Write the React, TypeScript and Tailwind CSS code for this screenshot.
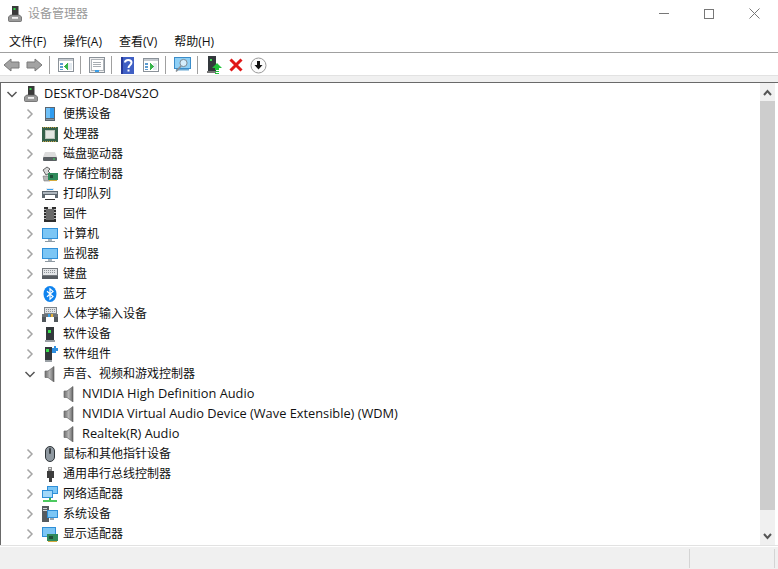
import { ReactNode } from 'react';

const Svg = ({ children }: { children: ReactNode }) => (
  <svg width={16} height={16} viewBox="0 0 16 16" shapeRendering="crispEdges" className="block shrink-0">
    {children}
  </svg>
);

const DesktopIcon = () => (
  <svg width={14} height={16} viewBox="0 0 14 16" className="block shrink-0">
    <rect x="4" y="0" width="6.5" height="9" fill="#3a3a3a" />
    <rect x="5.5" y="2" width="2" height="2" fill="#35d84a" />
    <path d="M2.5 9h9l2 2v3.5a1 1 0 0 1-1 1h-11a1 1 0 0 1-1-1V11z" fill="#9a9a9a" stroke="#555" strokeWidth="0.7" />
    <rect x="4" y="11" width="6" height="1.8" fill="#f2f2f2" />
  </svg>
);

const Portable = () => (
  <Svg>
    <rect x="3" y="1" width="10" height="14" fill="#5c6670" />
    <rect x="4" y="2" width="8" height="10" fill="#2f9cf0" />
    <rect x="4" y="2" width="4" height="10" fill="#6fc0f7" />
    <rect x="4" y="13" width="8" height="1" fill="#8b949c" />
  </Svg>
);

const Cpu = () => (
  <Svg>
    <rect x="0" y="1" width="16" height="15" fill="#35604a" />
    <path d="M1 1h14M1 15.5h14" stroke="#c9a24a" strokeWidth="1" strokeDasharray="1 1" />
    <rect x="3" y="4" width="10" height="9" fill="#b9c2ba" />
    <rect x="4" y="5" width="8" height="7" fill="#e3e7e3" />
  </Svg>
);

const Disk = () => (
  <svg width="16" height="16" viewBox="0 0 16 16" className="block shrink-0">
    <path d="M3 6h10L15 11H1z" fill="#dcdcdc" />
    <rect x="1" y="11" width="14" height="4" rx="1" fill="#5a5f63" />
    <rect x="11" y="12.5" width="2" height="1" fill="#39e05a" />
  </svg>
);

const Storage = () => (
  <svg width="16" height="16" viewBox="0 0 16 16" className="block shrink-0">
    <path d="M1 4l4-3 3 2-2 2 2 2-4 2z" fill="#d8d8d8" stroke="#444" strokeWidth="0.8" />
    <path d="M1 10h7v5H2z" fill="#b5b5b5" stroke="#666" strokeWidth="0.5" />
    <rect x="6" y="7" width="10" height="7" fill="#2f8a5b" />
    <rect x="8" y="9" width="3" height="3" fill="#1e4f38" />
    <rect x="7" y="14" width="8" height="1" fill="#d3aa3e" />
  </svg>
);

const Printer = () => (
  <Svg>
    <rect x="4" y="2" width="8" height="3" fill="#e8eef4" />
    <rect x="5" y="3" width="6" height="1" fill="#3aa0ea" />
    <rect x="0" y="5" width="16" height="7" fill="#5f686f" />
    <rect x="1" y="6" width="14" height="2" fill="#aeb6bd" />
    <rect x="3" y="9" width="10" height="5" fill="#fff" />
    <rect x="3" y="13" width="10" height="1" fill="#333" />
  </Svg>
);

const Chip = () => (
  <Svg>
    <rect x="2" y="1" width="12" height="15" fill="#2e2e2e" />
    <rect x="6" y="1" width="4" height="2" fill="#e8e8e8" />
    <rect x="4" y="3" width="8" height="11" fill="#6a6a6a" />
    <path d="M2 3h2v1H2zM2 6h2v1H2zM2 9h2v1H2zM2 12h2v1H2zM12 3h2v1h-2zM12 6h2v1h-2zM12 9h2v1h-2zM12 12h2v1h-2z" fill="#bdbdbd" />
  </Svg>
);

const Monitor = () => (
  <Svg>
    <rect x="0" y="2" width="16" height="11" fill="#2f8fd8" />
    <rect x="1" y="3" width="14" height="9" fill="#7cc6f5" />
    <rect x="6" y="13" width="4" height="2" fill="#a8b4bd" />
    <rect x="3" y="15" width="10" height="1" fill="#8e9aa3" />
  </Svg>
);

const Keyboard = () => (
  <Svg>
    <rect x="0" y="2" width="16" height="11" fill="#74797e" />
    <rect x="1" y="3" width="14" height="6" fill="#e4e6e8" />
    <path d="M2 4.5h12M2 6.5h12" stroke="#8f9499" strokeWidth="1" strokeDasharray="1 1" />
    <rect x="0" y="10" width="16" height="3" fill="#565b60" />
  </Svg>
);

const Bluetooth = () => (
  <svg width="16" height="16" viewBox="0 0 16 16" className="block shrink-0">
    <ellipse cx="8" cy="8" rx="6.5" ry="8" fill="#0f83ee" />
    <path d="M5 5.2l6 5.4L8 13.2V2.8l3 2.6L5 10.8" fill="none" stroke="#fff" strokeWidth="1.2" />
  </svg>
);

const Hid = () => (
  <Svg>
    <rect x="2" y="1" width="13" height="7" fill="#7f858a" />
    <rect x="3" y="2" width="11" height="5" fill="#dfe2e5" />
    <path d="M4 3h9M4 5h9" stroke="#8f9499" strokeDasharray="1 1" />
    <rect x="0" y="8" width="16" height="3" fill="#6d7378" />
    <rect x="0" y="11" width="4" height="5" fill="#50565b" />
    <rect x="12" y="11" width="4" height="5" fill="#50565b" />
    <rect x="6" y="8" width="2" height="3" fill="#3aa0ea" />
    <rect x="9" y="8" width="2" height="3" fill="#e2b23b" />
  </Svg>
);

const SoftwareDevice = () => (
  <Svg>
    <rect x="4" y="1" width="8" height="13" fill="#33383c" />
    <rect x="6" y="4" width="3" height="3" fill="#3be04f" />
    <rect x="3" y="14" width="10" height="2" fill="#9aa0a5" />
  </Svg>
);

const SoftwareComponent = () => (
  <Svg>
    <rect x="3" y="1" width="7" height="13" fill="#33383c" />
    <rect x="4" y="3" width="3" height="3" fill="#3be04f" />
    <rect x="3" y="14" width="7" height="2" fill="#9aa0a5" />
    <path d="M10 2h2V0h2v2h2v3h-2v2h-4z" fill="#2f8fe0" />
  </Svg>
);

const Speaker = ({ id }: { id: string }) => (
  <svg width="16" height="16" viewBox="0 0 16 16" className="block shrink-0">
    <defs>
      <linearGradient id={id} x1="0" x2="1" y1="0" y2="0">
        <stop offset="0" stopColor="#6e6e6e" />
        <stop offset="0.5" stopColor="#b4b4b4" />
        <stop offset="0.8" stopColor="#8a8a8a" />
        <stop offset="1" stopColor="#555" />
      </linearGradient>
    </defs>
    <path d="M3 5h3l6-4.500v15.500l-6-4.500H3z" fill={`url(#${id})`} stroke="#6a6a6a" strokeWidth="0.7" />
  </svg>
);

const Mouse = () => (
  <svg width="16" height="16" viewBox="0 0 16 16" className="block shrink-0">
    <rect x="3.5" y="0.5" width="9" height="15" rx="4.5" fill="#8f98a0" stroke="#2f3539" />
    <rect x="7" y="2" width="2" height="6" rx="1" fill="#3b4145" />
  </svg>
);

const Usb = () => (
  <Svg>
    <rect x="6" y="1" width="4" height="4" fill="#8e8e8e" />
    <rect x="7" y="2" width="2" height="1" fill="#e8e8e8" />
    <rect x="5" y="5" width="7" height="7" fill="#3d3d3d" />
    <rect x="7" y="12" width="3" height="4" fill="#3d3d3d" />
  </Svg>
);

const Network = () => (
  <Svg>
    <rect x="5" y="0" width="11" height="8" fill="#2f8fd8" />
    <rect x="6" y="1" width="9" height="6" fill="#7cc6f5" />
    <rect x="0" y="4" width="11" height="8" fill="#2f8fd8" />
    <rect x="1" y="5" width="9" height="6" fill="#a3d8f8" />
    <rect x="7" y="12" width="2" height="2" fill="#38b54a" />
    <rect x="1" y="14" width="14" height="2" fill="#4cc95f" />
  </Svg>
);

const SystemDevice = () => (
  <Svg>
    <rect x="0" y="0" width="7" height="16" fill="#555b60" />
    <rect x="1" y="2" width="4" height="1" fill="#d0d4d8" />
    <rect x="1" y="4" width="4" height="1" fill="#d0d4d8" />
    <rect x="5" y="4" width="11" height="8" fill="#2f8fd8" />
    <rect x="6" y="5" width="9" height="6" fill="#7cc6f5" />
    <rect x="8" y="12" width="4" height="2" fill="#9aa4ab" />
  </Svg>
);

const DisplayAdapter = () => (
  <Svg>
    <rect x="0" y="1" width="14" height="10" fill="#2f8fd8" />
    <rect x="1" y="2" width="12" height="8" fill="#7cc6f5" />
    <rect x="5" y="8" width="11" height="7" fill="#2f8a5b" />
    <rect x="7" y="10" width="4" height="3" fill="#1e4f38" />
    <rect x="6" y="15" width="9" height="1" fill="#d3aa3e" />
  </Svg>
);

const Chevron = ({ open }: { open?: boolean }) => (
  <svg width="12" height="12" viewBox="0 0 12 12" className="block shrink-0">
    <path
      d={open ? 'M1.5 4l4.5 4.5L10.5 4' : 'M3.5 1.5L8 6l-4.5 4.5'}
      fill="none"
      stroke={open ? '#555' : '#a6a6a6'}
      strokeWidth="1.5"
    />
  </svg>
);

const Sep = ({ className }: { className: string }) => <div className={`h-[18px] w-px shrink-0 bg-[#a0a0a0] ${className}`} />;

const ArrowLeft = () => (
  <svg width="17" height="14" viewBox="0 0 17 14" className="block shrink-0">
    <path d="M1 7l7-6v3h8v6H8v3z" fill="#a3a3a3" stroke="#7a7a7a" />
  </svg>
);

const ArrowRight = () => (
  <svg width="17" height="14" viewBox="0 0 17 14" className="block shrink-0">
    <path d="M16 7L9 1v3H1v6h8v3z" fill="#a3a3a3" stroke="#7a7a7a" />
  </svg>
);

const PaneIcon = ({ flip }: { flip?: boolean }) => (
  <Svg>
    <rect x="0.5" y="1.5" width="15" height="13" fill="#fff" stroke="#8b9299" />
    <rect x="1" y="2" width="14" height="2" fill="#c4cad0" />
    <path d="M2 6h3v2H2zM2 9h3v2H2zM2 12h3v1H2z" fill="#5b9bd0" />
    <path d="M10 6h4v7h-4z" fill="#e3eaf0" />
    <path d={flip ? 'M7 6l4 3.5-4 3.5z' : 'M10 6L6 9.5l4 3.5z'} fill="#35b34a" />
  </Svg>
);

const Properties = () => (
  <Svg>
    <rect x="0.5" y="0.5" width="15" height="15" fill="#f0f0f0" stroke="#8b9299" />
    <rect x="2" y="2" width="12" height="11" fill="#fff" stroke="#b0b5ba" />
    <path d="M4 5h8M4 7h8M4 9h8" stroke="#a8adb2" />
    <rect x="6" y="13" width="4" height="2" fill="#3aa0ea" />
  </Svg>
);

const Help = () => (
  <svg width="14" height="17" viewBox="0 0 14 17" className="block shrink-0">
    <rect x="0" y="0" width="13" height="17" fill="#3f5fc4" />
    <rect x="0" y="0" width="2" height="17" fill="#26399a" />
    <path d="M4 5.500c0-3.500 6.500-3.500 6.500 0 0 3-3 2.500-3 5.500" fill="none" stroke="#fff" strokeWidth="2" />
    <rect x="6.500" y="12.500" width="2" height="2" fill="#fff" />
  </svg>
);

const ScanMonitor = () => (
  <svg width="17" height="16" viewBox="0 0 17 16" className="block shrink-0">
    <rect x="0.5" y="0.5" width="16" height="11" fill="#8fd0f6" stroke="#3b8dc9" />
    <rect x="2" y="12" width="13" height="1.5" fill="#6aa9d3" />
    <circle cx="9.5" cy="6" r="3.6" fill="#d5eefc" stroke="#7e8a93" />
    <path d="M7 9l-5 5.500" stroke="#8a8f94" strokeWidth="1.6" />
  </svg>
);

const UpdateDriver = () => (
  <svg width="15" height="18" viewBox="0 0 15 18" className="block shrink-0">
    <rect x="1" y="0" width="8" height="15" fill="#33383c" />
    <rect x="3" y="3" width="2" height="2" fill="#3be04f" />
    <rect x="0" y="15" width="9" height="2" fill="#777" />
    <path d="M10 7l5 5h-3v2H8v-2H5z" fill="#21c23a" />
    <rect x="8" y="15" width="4" height="1" fill="#21c23a" />
    <rect x="8" y="17" width="4" height="1" fill="#21c23a" />
  </svg>
);

const RedX = () => (
  <svg width="14" height="14" viewBox="0 0 14 14" className="block shrink-0">
    <path d="M1.500 1.500l11 11M12.500 1.500l-11 11" stroke="#e01818" strokeWidth="3" />
  </svg>
);

const CircleDown = () => (
  <svg width="17" height="17" viewBox="0 0 17 17" className="block shrink-0">
    <circle cx="8.500" cy="8.500" r="7.500" fill="#fbfbfb" stroke="#9a9a9a" />
    <path d="M7 4h3v4h2.500l-4 4.500-4-4.500H7z" fill="#111" />
  </svg>
);

const Row = ({ icon, label, open }: { icon: ReactNode; label: string; open?: boolean }) => (
  <div className="flex h-5 items-center pl-[23px]">
    <Chevron open={open} />
    <div className="ml-1.5">{icon}</div>
    <span className="ml-[5px] whitespace-nowrap">{label}</span>
  </div>
);

const Child = ({ id, label }: { id: string; label: string }) => (
  <div className="flex h-5 items-center pl-[60px]">
    <Speaker id={id} />
    <span className="ml-[5px] whitespace-nowrap text-[12.8px]">{label}</span>
  </div>
);

const menus = ['文件(F)', '操作(A)', '查看(V)', '帮助(H)'];

export default function App() {
  return (
    <div className="flex h-[569px] w-[778px] flex-col overflow-hidden bg-white text-[12px] text-black [font-family:'Open_Sans','Noto_Sans_CJK_SC',sans-serif]">
      {/* title bar */}
      <div className="flex h-[27px] shrink-0 items-center pl-2">
        <DesktopIcon />
        <span className="ml-[6px] text-[#999]">设备管理器</span>
        <div className="ml-auto flex items-center pr-[18px]">
          <div className="h-px w-2.5 bg-[#777]" />
          <div className="ml-[35px] h-2.5 w-2.5 border border-[#777]" />
          <svg width="11" height="11" viewBox="0 0 11 11" className="ml-[35px] block">
            <path d="M0.500 0.500l10 10M10.500 0.500l-10 10" stroke="#777" />
          </svg>
        </div>
      </div>

      {/* menu */}
      <div className="flex h-[26px] shrink-0 items-center gap-[17px] border-b border-[#a0a0a0] pb-0.5 pl-[9px] pt-1.5 text-[#111]">
        {menus.map((m) => (
          <span key={m}>{m}</span>
        ))}
      </div>

      {/* toolbar */}
      <div className="flex h-[22px] shrink-0 items-center pl-[3px] pt-0.5">
        <ArrowLeft />
        <div className="ml-1.5">
          <ArrowRight />
        </div>
        <Sep className="ml-1.5" />
        <div className="ml-2">
          <PaneIcon />
        </div>
        <Sep className="ml-1.5" />
        <div className="ml-2">
          <Properties />
        </div>
        <Sep className="ml-1.5" />
        <div className="ml-[9px]">
          <Help />
        </div>
        <div className="ml-2">
          <PaneIcon flip />
        </div>
        <Sep className="ml-1.5" />
        <div className="ml-2">
          <ScanMonitor />
        </div>
        <Sep className="ml-1.5" />
        <div className="ml-[9px]">
          <UpdateDriver />
        </div>
        <div className="ml-[7px]">
          <RedX />
        </div>
        <div className="ml-[7px]">
          <CircleDown />
        </div>
      </div>

      <div className="h-[7px] shrink-0 border-t border-[#e2e2e2] bg-[#f0f0f0]" />

      {/* tree + scrollbar */}
      <div className="flex min-h-0 flex-1 border-l border-t border-[#696969]">
        <div className="min-w-0 flex-1 overflow-hidden pt-px text-[#111]">
          <div className="flex h-5 items-center pl-[5px]">
            <Chevron open />
            <div className="ml-1.5">
              <DesktopIcon />
            </div>
            <span className="ml-1.5 whitespace-nowrap text-[12.7px]">DESKTOP-D84VS2O</span>
          </div>
          <Row icon={<Portable />} label="便携设备" />
          <Row icon={<Cpu />} label="处理器" />
          <Row icon={<Disk />} label="磁盘驱动器" />
          <Row icon={<Storage />} label="存储控制器" />
          <Row icon={<Printer />} label="打印队列" />
          <Row icon={<Chip />} label="固件" />
          <Row icon={<Monitor />} label="计算机" />
          <Row icon={<Monitor />} label="监视器" />
          <Row icon={<Keyboard />} label="键盘" />
          <Row icon={<Bluetooth />} label="蓝牙" />
          <Row icon={<Hid />} label="人体学输入设备" />
          <Row icon={<SoftwareDevice />} label="软件设备" />
          <Row icon={<SoftwareComponent />} label="软件组件" />
          <Row icon={<Speaker id="spk0" />} label="声音、视频和游戏控制器" open />
          <Child id="spk1" label="NVIDIA High Definition Audio" />
          <Child id="spk2" label="NVIDIA Virtual Audio Device (Wave Extensible) (WDM)" />
          <Child id="spk3" label="Realtek(R) Audio" />
          <Row icon={<Mouse />} label="鼠标和其他指针设备" />
          <Row icon={<Usb />} label="通用串行总线控制器" />
          <Row icon={<Network />} label="网络适配器" />
          <Row icon={<SystemDevice />} label="系统设备" />
          <Row icon={<DisplayAdapter />} label="显示适配器" />
        </div>
        <div className="mr-[3px] flex w-[15px] shrink-0 flex-col bg-[#f0f0f0]">
          <div className="flex h-[18px] shrink-0 items-center justify-center">
            <svg width="9" height="7" viewBox="0 0 9 7" className="block">
              <path d="M1 6l3.500-4L8 6" fill="none" stroke="#555" strokeWidth="2" />
            </svg>
          </div>
          <div className="h-[409px] shrink-0 bg-[#cdcdcd]" />
          <div className="mt-auto flex h-[18px] shrink-0 items-center justify-center">
            <svg width="9" height="7" viewBox="0 0 9 7" className="block">
              <path d="M1 1l3.500 4L8 1" fill="none" stroke="#555" strokeWidth="2" />
            </svg>
          </div>
        </div>
      </div>

      {/* status bar */}
      <div className="h-px shrink-0 bg-[#e2e2e2]" />
      <div className="flex h-[23px] shrink-0 border-t border-white bg-[#f0f0f0] pb-px pt-0.5">
        <div className="w-[690px] border-r border-[#d4d4d4]" />
        <div className="w-[85px] border-r border-[#d4d4d4]" />
      </div>
    </div>
  );
}
